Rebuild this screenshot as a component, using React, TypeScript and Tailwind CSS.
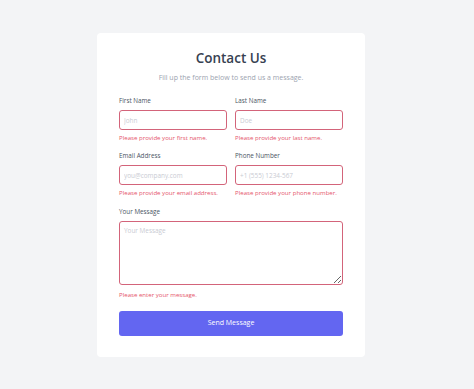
import React from "react";

const font = { fontFamily: '"Open Sans", "Noto Sans", sans-serif' };

function Field({ label, placeholder, error, type = "text" }: { label: string; placeholder: string; error: string; type?: string }) {
  return (
    <div className="flex flex-col">
      <label className="text-[6.3px] leading-[12px] text-[#4b5563]">{label}</label>
      <input
        type={type}
        placeholder={placeholder}
        className="mt-[3px] h-[20px] w-full rounded-[3px] border-[1.5px] border-[#d3647a] bg-white px-[4px] text-[6.4px] text-gray-700 outline-none placeholder:text-[#c9cbd3]"
      />
      <p className="mt-[3px] text-[6.1px] leading-[10px] text-[#e5566b]">{error}</p>
    </div>
  );
}

export default function App() {
  return (
    <div className="min-h-[389px] w-[474px] bg-[#f3f4f6] pt-[33px] pl-[97px]" style={font}>
      <div className="w-[268px] rounded-[4px] bg-white px-[22px] pt-[13px] pb-[21px]">
        <h1 className="text-center text-[13.5px] font-semibold leading-[24px] text-[#374151]">Contact Us</h1>
        <p className="mt-[2px] text-center text-[7px] leading-[12px] text-[#9ca3af]">Fill up the form below to send us a message.</p>

        <div className="mt-[11px] grid grid-cols-2 gap-x-[8px] gap-y-[7px]">
          <Field label="First Name" placeholder="John" error="Please provide your first name." />
          <Field label="Last Name" placeholder="Doe" error="Please provide your last name." />
          <Field label="Email Address" placeholder="you@company.com" error="Please provide your email address." type="email" />
          <Field label="Phone Number" placeholder="+1 (555) 1234-567" error="Please provide your phone number." />
        </div>

        <div className="mt-[8px] flex flex-col">
          <label className="text-[6.3px] leading-[12px] text-[#4b5563]">Your Message</label>
          <textarea
            placeholder="Your Message"
            className="mt-[3px] h-[64px] w-full resize-y rounded-[3px] border-[1.5px] border-[#d3647a] bg-white px-[4px] py-[4px] text-[6.4px] text-gray-700 outline-none placeholder:text-[#c9cbd3]"
          />
          <p className="mt-[5px] text-[6.1px] leading-[10px] text-[#e5566b]">Please enter your message.</p>
        </div>

        <button className="mt-[11px] h-[25px] w-full rounded-[3px] bg-[#6366f1] text-[7px] font-medium text-white">
          Send Message
        </button>
      </div>
    </div>
  );
}
